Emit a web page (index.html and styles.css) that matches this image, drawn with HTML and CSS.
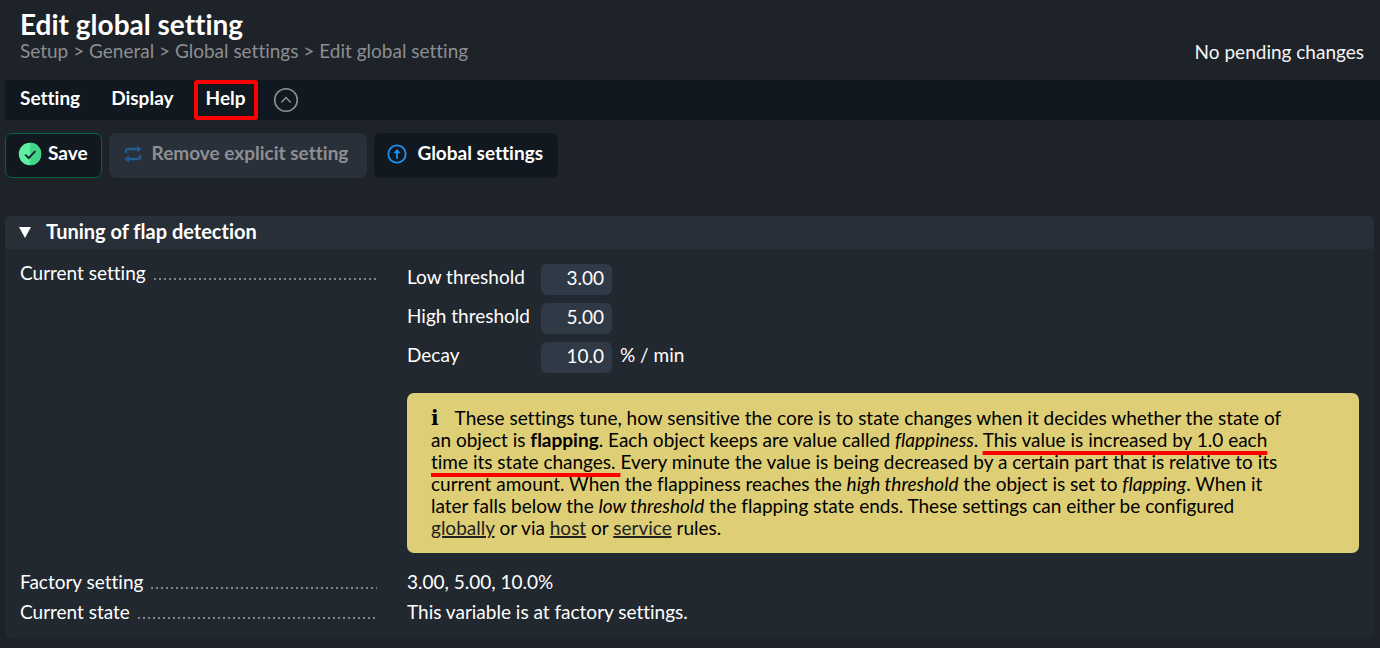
FILE: index.html
```html
<!DOCTYPE html>
<html lang="en">
<head>
<meta charset="utf-8">
<title>Edit global setting</title>
<link rel="stylesheet" href="styles.css">
</head>
<body>
<header class="header">
  <div>
    <h1 class="title">Edit global setting</h1>
    <nav class="crumbs" aria-label="Breadcrumb"><a href="#">Setup</a> &gt; <a href="#">General</a> &gt; <a href="#">Global settings</a> &gt; <a href="#">Edit global setting</a></nav>
  </div>
  <div class="pending">No pending changes</div>
</header>
<nav class="menubar" aria-label="Page menu">
  <button class="menu">Setting</button>
  <button class="menu">Display</button>
  <button class="menu marked">Help</button>
  <button class="toggle" aria-label="Hide toolbar">
    <svg width="26" height="26" viewBox="0 0 26 26" fill="none" stroke="#8f9090"><circle cx="13" cy="13" r="11.3" stroke-width="1.6"/><path d="M8.3 15.5 13 10.6l4.7 4.9" stroke-width="1.5"/></svg>
  </button>
</nav>
<div class="toolbar">
  <button class="action save">
    <svg width="24" height="24" viewBox="0 0 24 24"><circle cx="12" cy="12" r="11.2" fill="#5cf0a0"/><path d="M12 .8a11.2 11.2 0 0 1 0 22.4z" fill="#42d487"/><path d="m7.2 12.6 3.5 3.5 6.6-7" fill="none" stroke="#17212a" stroke-width="2"/></svg>
    <span>Save</span>
  </button>
  <button class="action remove" disabled>
    <svg width="18" height="18" viewBox="0 0 18 18" fill="none" stroke="#205c92" stroke-width="2.4"><path d="M2 8V5.8Q2 4 3.8 4H14M16 10v2.2q0 1.8-1.8 1.8H4"/><path d="M13 .4 17.8 4 13 7.6zM5 10.4.2 14 5 17.6z" fill="#205c92" stroke="none"/></svg>
    <span>Remove explicit setting</span>
  </button>
  <button class="action up">
    <svg width="20" height="20" viewBox="0 0 20 20" fill="none" stroke="#1c94f4" stroke-width="1.8"><circle cx="10" cy="10" r="8.7"/><path d="M10 14.8V6"/><path d="M10 5 6.4 9.2h7.2z" fill="#1c94f4" stroke="none"/></svg>
    <span>Global settings</span>
  </button>
</div>
<main class="panel">
  <h2 class="panel-head"><svg width="12" height="11" viewBox="0 0 12 11"><path d="M0 0h12L6 11z" fill="#fff"/></svg><span>Tuning of flap detection</span></h2>
  <div class="panel-body">
    <div class="row">
      <div class="label"><span>Current setting</span><i class="dots"></i></div>
      <div class="content">
        <div class="fields">
          <label for="low">Low threshold</label><div><input id="low" value="3.00"></div>
          <label for="high">High threshold</label><div><input id="high" value="5.00"></div>
          <label for="decay">Decay</label><div><input id="decay" value="10.0"><span>% / min</span></div>
        </div>
        <div class="help"><b class="info">i</b>These settings tune, how sensitive the core is to state changes when it decides whether the state of<br>an object is <b>flapping</b>. Each object keeps are value called <em>flappiness</em>. <mark>This value is increased by 1.0 each<br>time its state changes. </mark>Every minute the value is being decreased by a certain part that is relative to its<br>current amount. When the flappiness reaches the <em>high threshold</em> the object is set to <em>flapping</em>. When it<br>later falls below the <em>low threshold</em> the flapping state ends. These settings can either be configured<br><a href="#">globally</a> or via <a href="#">host</a> or <a href="#">service</a> rules.</div>
      </div>
    </div>
    <div class="row">
      <div class="label"><span>Factory setting</span><i class="dots"></i></div>
      <div class="content">3.00, 5.00, 10.0%</div>
    </div>
    <div class="row">
      <div class="label"><span>Current state</span><i class="dots"></i></div>
      <div class="content">This variable is at factory settings.</div>
    </div>
  </div>
</main>
</body>
</html>
```
FILE: styles.css
```css
* { box-sizing: border-box; }
body {
  margin: 0;
  background: #1e2229;
  color: #fff;
  font-family: Lato, sans-serif;
  font-size: 19px;
  line-height: 22px;
  font-variant-ligatures: none;
}
button, input { font: inherit; font-variant-ligatures: none; color: inherit; }
button { border: 0; background: none; padding: 0; }
svg { display: block; flex: none; }
.header { display: flex; justify-content: space-between; align-items: flex-end; height: 80px; padding: 0 16px 17px 20px; }
.title { margin: 0; font-size: 28px; line-height: 32px; font-weight: 700; }
.crumbs { margin-bottom: 1px; color: #8c8e91; }
.crumbs a { color: inherit; text-decoration: none; }
.pending { color: #f5f5f5; }
.menubar { display: flex; align-items: center; height: 40px; margin-left: 5px; background: #11181f; border-radius: 4px 0 0 4px; }
.menu { height: 40px; padding: 0 16px 4px 15px; font-weight: 700; }
.marked { padding: 0 8px 4px; margin: 0 15px 0 4px; border: 4px solid #f00; border-radius: 3px; }
.toolbar { display: flex; gap: 7px; margin: 13px 5px 38px; }
.action { display: flex; align-items: center; height: 45px; border-radius: 7px; background: #11181f; font-weight: 700; padding: 0 13px 3px 12px; }
.action span { padding-bottom: 3px; }
.save { border: 1px solid #06643d; gap: 6px; }
.remove { background: #2a3039; color: #8c8f93; gap: 10px; padding: 0 19px 3px 15px; }
.up { gap: 10px; padding: 0 15px 3px 13px; }
.panel { margin: 0 6px 0 5px; border-radius: 6px; background: #22282f; overflow: hidden; }
.panel-head { display: flex; align-items: center; gap: 15px; height: 33px; margin: 0; padding: 0 14px; font-size: 20px; line-height: 22px; font-weight: 700; background: #282f38; }
.panel-head span { padding-bottom: 3px; }
.panel-body { display: flex; flex-direction: column; gap: 8px; padding: 13px 15px 16px; }
.row { display: flex; }
.label { display: flex; align-items: baseline; gap: 8px; width: 357px; height: 22px; margin-right: 30px; flex: none; }
.dots { flex: 1; height: 2px; background: repeating-linear-gradient(90deg, #81858a 0 2px, transparent 2px 5px); }
.content { flex: 1; }
.fields { display: grid; grid-template-columns: 126px 1fr; gap: 8px; padding-top: 2px; }
.fields label { padding-top: 2px; white-space: nowrap; }
.fields div { display: flex; gap: 8px; line-height: 26px; }
.fields input { width: 71px; height: 31px; padding: 0 8px 5px; border: 0; border-radius: 6px; background: #303946; text-align: right; }
.help { margin: 20px 0 10px; padding: 14px 24px; border-radius: 7px; background: #dece76; color: #000; }
.help a { color: #222; text-decoration-thickness: 2px; text-decoration-skip-ink: auto; }
.info { margin-right: 16px; font-family: "DejaVu Serif", serif; font-size: 20px; line-height: 20px; }
mark { background: none; color: inherit; text-decoration: underline 4px #f00; text-underline-offset: 4px; text-decoration-skip-ink: none; }
```
